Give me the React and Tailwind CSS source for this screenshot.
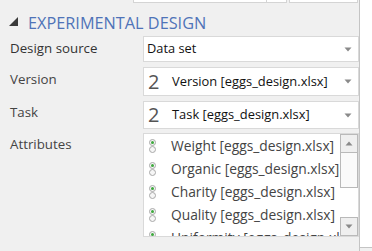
import React from "react";

const font = { fontFamily: '"Open Sans", "Noto Sans", sans-serif' };

function Arrow() {
  return (
    <svg width="8" height="5" viewBox="0 0 8 5" className="shrink-0">
      <path d="M0.5 0.5 L7.5 0.5 L4 4.5 Z" fill="#8a8a8a" />
    </svg>
  );
}

function Radio({ checked }) {
  return (
    <div className="w-[7px] h-[7px] rounded-full border border-[#a9a9a9] bg-[#f6f6f6] flex items-center justify-center">
      {checked && <div className="w-[3px] h-[3px] rounded-full bg-[#3da83d]" />}
    </div>
  );
}

const items = [
  "Weight [eggs_design.xlsx]",
  "Organic [eggs_design.xlsx]",
  "Charity [eggs_design.xlsx]",
  "Quality [eggs_design.xlsx]",
  "Uniformity [eggs_design.xlsx]",
];

export default function App() {
  return (
    <div className="w-[372px] h-[251px] bg-[#f0f0f0] flex overflow-hidden" style={font}>
      <div className="w-[360px] h-full border-r border-[#c4c4c4] flex flex-col">
        {/* top remnants of previous inputs */}
        <div className="flex h-[3px]">
          <div className="ml-[133px] w-[154px] h-[3px] bg-white border-x border-b border-[#d4d4d4] flex justify-end">
            <div className="w-[20px] h-full border-l border-[#d4d4d4]" />
          </div>
          <div className="ml-[2px] w-[69px] h-[3px] bg-white border-x border-b border-[#d4d4d4]" />
        </div>

        {/* heading */}
        <div className="flex items-center h-[30px] pl-[9px] mt-[5px]">
          <svg width="9" height="9" viewBox="0 0 9 9" className="shrink-0 mt-[-4px]">
            <path d="M9 0 L9 9 L0 9 Z" fill="#3a3a3a" />
          </svg>
          <span className="ml-[10px] text-[16.3px] leading-none text-[#4f73b8]">
            EXPERIMENTAL DESIGN
          </span>
        </div>

        {/* rows */}
        <div className="flex flex-col pl-[10px] mt-[-2px]">
          <div className="flex items-center h-[26px]">
            <div className="w-[133px] text-[13.3px] text-[#333]">Design source</div>
            <div className="w-[216px] h-[26px] bg-white border border-[#d9d9d9] flex items-center pl-[3px] pr-[6px]">
              <span className="flex-1 text-[12.8px] text-[#111]">Data set</span>
              <Arrow />
            </div>
          </div>

          <div className="flex items-start h-[29px] mt-[5px]">
            <div className="w-[133px] text-[13.3px] text-[#444] pt-[3px]">Version</div>
            <div className="w-[216px] h-[29px] bg-white border border-[#d9d9d9] flex items-center pl-[4px] pr-[6px]">
              <span className="w-[24px] text-[20px] leading-none text-[#555]">2</span>
              <span className="flex-1 text-[12.9px] text-[#111]">Version [eggs_design.xlsx]</span>
              <Arrow />
            </div>
          </div>

          <div className="flex items-start h-[28px] mt-[5px]">
            <div className="w-[133px] text-[13.3px] text-[#444] pt-[2px]">Task</div>
            <div className="w-[216px] h-[28px] bg-white border border-[#d9d9d9] flex items-center pl-[4px] pr-[6px]">
              <span className="w-[24px] text-[20px] leading-none text-[#555]">2</span>
              <span className="flex-1 text-[12.9px] text-[#111]">Task [eggs_design.xlsx]</span>
              <Arrow />
            </div>
          </div>

          <div className="flex items-start mt-[4px]">
            <div className="w-[133px] text-[13.3px] text-[#444] pt-[2px]">Attributes</div>
            <div className="w-[216px] h-[104px] bg-white border border-[#d9d9d9] flex overflow-hidden">
              <div className="flex-1 flex flex-col pl-[5px] pt-[5px] overflow-hidden">
                {items.map((t) => (
                  <div key={t} className="flex h-[23px] shrink-0">
                    <div className="flex flex-col w-[22px] shrink-0">
                      <Radio checked />
                      <Radio />
                    </div>
                    <span className="text-[13.8px] leading-[14px] text-[#444] whitespace-nowrap">{t}</span>
                  </div>
                ))}
              </div>
              <div className="w-[18px] shrink-0 flex flex-col bg-white">
                <div className="h-[19px] border border-[#b9b9b9] bg-[#efefef] flex items-center justify-center">
                  <svg width="8" height="5" viewBox="0 0 8 5"><path d="M0.5 4.5 L7.5 4.5 L4 0.5 Z" fill="#8a8a8a" /></svg>
                </div>
                <div className="h-[35px] border-x border-b border-[#b9b9b9] bg-[#fafafa]" />
                <div className="flex-1" />
                <div className="h-[19px] border border-[#b9b9b9] bg-[#efefef] flex items-center justify-center">
                  <Arrow />
                </div>
              </div>
            </div>
          </div>
        </div>
      </div>
      <div className="flex-1 h-[248px] bg-white border-b border-[#c4c4c4]" />
    </div>
  );
}
